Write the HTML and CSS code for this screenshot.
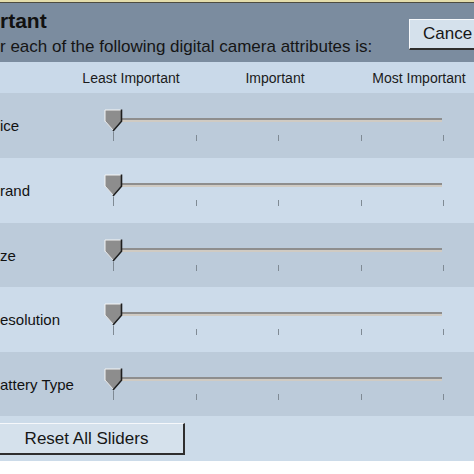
FILE: index.html
```html
<!DOCTYPE html>
<html lang="en">
<head>
<meta charset="utf-8">
<title>Digital camera attributes</title>
<link rel="stylesheet" href="styles.css">
</head>
<body>
<div class="frame">
  <div class="topbar"></div>
  <header class="header">
    <div class="heading">
      <h1 class="title">rtant</h1>
      <p class="subtitle">r each of the following digital camera attributes is:</p>
    </div>
    <button class="btn btn-cancel" type="button">Cance</button>
  </header>
  <div class="colhead">
    <span class="colhead-label">Least Important</span>
    <span class="colhead-label">Important</span>
    <span class="colhead-label">Most Important</span>
  </div>
  <div class="rows">
    <div class="row row-dark">
      <div class="label">ice</div>
      <div class="slider">
        <div class="track"></div>
        <div class="ticks"><i></i><i></i><i></i><i></i><i></i></div>
        <svg class="thumb" width="19" height="23" viewBox="0 0 19 23"><polygon points="1,1 17,1 17,12 9,21 1,12" fill="#8d8d8d"/><polyline points="1,12.5 1,1 17,1" fill="none" stroke="#f4f4f4" stroke-width="1"/><polyline points="1,12 9,21" fill="none" stroke="#e8e8e8" stroke-width="1"/><polyline points="17.5,0.5 17.5,12.3 9,22" fill="none" stroke="#1e1e1e" stroke-width="1.6"/></svg>
      </div>
    </div>
    <div class="row row-light">
      <div class="label">rand</div>
      <div class="slider">
        <div class="track"></div>
        <div class="ticks"><i></i><i></i><i></i><i></i><i></i></div>
        <svg class="thumb" width="19" height="23" viewBox="0 0 19 23"><polygon points="1,1 17,1 17,12 9,21 1,12" fill="#8d8d8d"/><polyline points="1,12.5 1,1 17,1" fill="none" stroke="#f4f4f4" stroke-width="1"/><polyline points="1,12 9,21" fill="none" stroke="#e8e8e8" stroke-width="1"/><polyline points="17.5,0.5 17.5,12.3 9,22" fill="none" stroke="#1e1e1e" stroke-width="1.6"/></svg>
      </div>
    </div>
    <div class="row row-dark">
      <div class="label">ze</div>
      <div class="slider">
        <div class="track"></div>
        <div class="ticks"><i></i><i></i><i></i><i></i><i></i></div>
        <svg class="thumb" width="19" height="23" viewBox="0 0 19 23"><polygon points="1,1 17,1 17,12 9,21 1,12" fill="#8d8d8d"/><polyline points="1,12.5 1,1 17,1" fill="none" stroke="#f4f4f4" stroke-width="1"/><polyline points="1,12 9,21" fill="none" stroke="#e8e8e8" stroke-width="1"/><polyline points="17.5,0.5 17.5,12.3 9,22" fill="none" stroke="#1e1e1e" stroke-width="1.6"/></svg>
      </div>
    </div>
    <div class="row row-light">
      <div class="label">esolution</div>
      <div class="slider">
        <div class="track"></div>
        <div class="ticks"><i></i><i></i><i></i><i></i><i></i></div>
        <svg class="thumb" width="19" height="23" viewBox="0 0 19 23"><polygon points="1,1 17,1 17,12 9,21 1,12" fill="#8d8d8d"/><polyline points="1,12.5 1,1 17,1" fill="none" stroke="#f4f4f4" stroke-width="1"/><polyline points="1,12 9,21" fill="none" stroke="#e8e8e8" stroke-width="1"/><polyline points="17.5,0.5 17.5,12.3 9,22" fill="none" stroke="#1e1e1e" stroke-width="1.6"/></svg>
      </div>
    </div>
    <div class="row row-dark">
      <div class="label">attery Type</div>
      <div class="slider">
        <div class="track"></div>
        <div class="ticks"><i></i><i></i><i></i><i></i><i></i></div>
        <svg class="thumb" width="19" height="23" viewBox="0 0 19 23"><polygon points="1,1 17,1 17,12 9,21 1,12" fill="#8d8d8d"/><polyline points="1,12.5 1,1 17,1" fill="none" stroke="#f4f4f4" stroke-width="1"/><polyline points="1,12 9,21" fill="none" stroke="#e8e8e8" stroke-width="1"/><polyline points="17.5,0.5 17.5,12.3 9,22" fill="none" stroke="#1e1e1e" stroke-width="1.6"/></svg>
      </div>
    </div>
  </div>
  <footer class="footer">
    <button class="btn btn-reset" type="button">Reset All Sliders</button>
  </footer>
</div>
</body>
</html>
```

FILE: styles.css
```css
html, body {
  margin: 0;
  padding: 0;
  background: #ffffff;
  overflow: hidden;
}

body {
  width: 474px;
  height: 474px;
  font-family: "Liberation Sans", Arial, sans-serif;
  color: #141414;
}

.frame {
  width: 474px;
  overflow: hidden;
}

.topbar {
  height: 2px;
  background: #e4dcaa;
  border-bottom: 1px solid #4e4c40;
}

.header {
  display: flex;
  align-items: flex-start;
  height: 59px;
  background: #7b8c9f;
  box-sizing: border-box;
  padding-top: 6px;
}

.heading {
  flex: 1;
  min-width: 0;
  white-space: nowrap;
}

.title {
  margin: 0;
  font-size: 21px;
  line-height: 24px;
  font-weight: bold;
  color: #111;
}

.subtitle {
  margin: 4px 0 0;
  font-size: 17px;
  line-height: 20px;
  color: #151515;
}

.btn {
  font-family: "Liberation Sans", Arial, sans-serif;
  color: #161616;
  background: #d5e1ec;
  border-style: solid;
  border-width: 1px 2px 2px 1px;
  border-color: #f6f8fb #2e2e2e #2e2e2e #f6f8fb;
  padding: 0;
  box-sizing: border-box;
  white-space: nowrap;
}

.btn-cancel {
  flex: none;
  width: 80px;
  height: 31px;
  margin-top: 10px;
  margin-right: -15px;
  text-align: left;
  padding-left: 13px;
  font-size: 17px;
}

.colhead {
  display: flex;
  gap: 44px;
  height: 31px;
  padding-left: 81px;
  background: #c9d9e9;
  align-items: center;
}

.colhead-label {
  flex: none;
  width: 100px;
  text-align: center;
  font-size: 14px;
  white-space: nowrap;
  color: #1b1b1b;
}

.row {
  display: flex;
  height: 65px;
}

.row:nth-child(3),
.row:nth-child(5) {
  height: 64px;
}

.row-dark {
  background: #bccbda;
}

.row-light {
  background: #ccdbea;
}

.label {
  flex: none;
  width: 104px;
  padding-top: 24px;
  font-size: 15px;
  line-height: 17px;
  white-space: nowrap;
  color: #121212;
}

.slider {
  position: relative;
  flex: none;
  width: 350px;
}

.track {
  margin-left: 9px;
  margin-top: 25px;
  width: 329px;
  height: 2px;
  background: #8e8e8e;
  border-bottom: 2px solid #d0cbc3;
}

.ticks {
  display: flex;
  justify-content: space-between;
  margin-left: 9px;
  margin-top: 13px;
  width: 331px;
}

.ticks i {
  display: block;
  width: 1px;
  height: 6px;
  background: #7f8a94;
}

.ticks i:first-child {
  margin-top: -3px;
  height: 9px;
}

.thumb {
  position: absolute;
  left: 0;
  top: 16px;
  display: block;
}

.footer {
  height: 45px;
  background: #ccdbe9;
  padding-top: 7px;
  box-sizing: border-box;
}

.btn-reset {
  display: block;
  width: 196px;
  height: 32px;
  margin-left: -11px;
  font-size: 17px;
  text-align: center;
}
```
